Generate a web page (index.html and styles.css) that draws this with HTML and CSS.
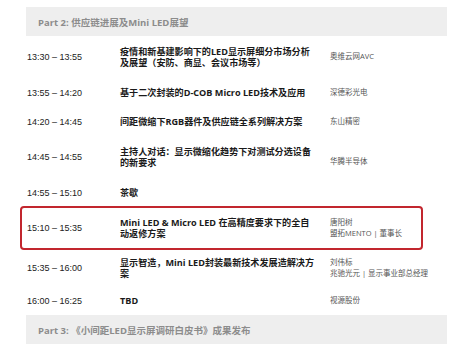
FILE: index.html
```html
<!DOCTYPE html>
<html lang="zh">
<head>
<meta charset="utf-8">
<link rel="stylesheet" href="styles.css">
</head>
<body>
<div class="agenda">
  <div class="part">Part 2: 供应链进展及Mini LED展望</div>
  <div class="row r2">
    <div class="time">13:30 – 13:55</div>
    <div class="title">疫情和新基建影响下的LED显示屏细分市场分析<br>及展望（安防、商显、会议市场等）</div>
    <div class="spk">奥维云网AVC</div>
  </div>
  <div class="row r1">
    <div class="time">13:55 – 14:20</div>
    <div class="title">基于二次封装的D-COB Micro LED技术及应用</div>
    <div class="spk">深德彩光电</div>
  </div>
  <div class="row r1">
    <div class="time">14:20 – 14:45</div>
    <div class="title">间距微缩下RGB器件及供应链全系列解决方案</div>
    <div class="spk">东山精密</div>
  </div>
  <div class="row r2">
    <div class="time">14:45 – 14:55</div>
    <div class="title">主持人对话：显示微缩化趋势下对测试分选设备<br>的新要求</div>
    <div class="spk low">华腾半导体</div>
  </div>
  <div class="row r1">
    <div class="time">14:55 – 15:10</div>
    <div class="title">茶歇</div>
    <div class="spk"></div>
  </div>
  <div class="row hl">
    <div class="time">15:10 – 15:35</div>
    <div class="title">Mini LED &amp; Micro LED 在高精度要求下的全自<br>动返修方案</div>
    <div class="spk">唐阳树<br>盟拓MENTO | 董事长</div>
  </div>
  <div class="row r3">
    <div class="time">15:35 – 16:00</div>
    <div class="title">显示智造，Mini LED封装最新技术发展造解决方<br>案</div>
    <div class="spk">刘伟标<br>兆驰光元 | 显示事业部总经理</div>
  </div>
  <div class="row r1">
    <div class="time">16:00 – 16:25</div>
    <div class="title">TBD</div>
    <div class="spk">视源股份</div>
  </div>
  <div class="part">Part 3: 《小间距LED显示屏调研白皮书》成果发布</div>
</div>
</body>
</html>
```

FILE: styles.css
```css
html, body {
  margin: 0;
  padding: 0;
  background: #ffffff;
}
.agenda {
  width: 421px;
  margin-left: 26px;
  padding-top: 7px;
  font-family: "Open Sans", "Noto Sans CJK SC", sans-serif;
  color: #222;
}
.part {
  height: 29px;
  background: #eeeeee;
  box-sizing: border-box;
  padding-left: 12px;
  display: flex;
  align-items: center;
  font-size: 9.5px;
  font-weight: bold;
  color: #8c8c8c;
}
.row {
  display: grid;
  grid-template-columns: 94px 210px 1fr;
  align-items: center;
  box-sizing: border-box;
}
.r1 { height: 29px; }
.r2 { height: 42px; }
.r3 { height: 36px; }
.time {
  padding-left: 1px;
  font-family: "Liberation Sans", sans-serif;
  font-size: 9px;
  color: #222;
}
.title {
  font-size: 9.1px;
  line-height: 11.5px;
  font-weight: bold;
  color: #1a1a1a;
  white-space: nowrap;
}
.spk {
  font-size: 7.5px;
  line-height: 11.5px;
  color: #555;
  white-space: nowrap;
}
.spk.low { padding-top: 10px; }
.hl {
  height: 44px;
  margin: -1px 24px 0 -6px;
  padding-left: 4px;
  border: 2px solid #c2262e;
  border-radius: 4px;
}
```
